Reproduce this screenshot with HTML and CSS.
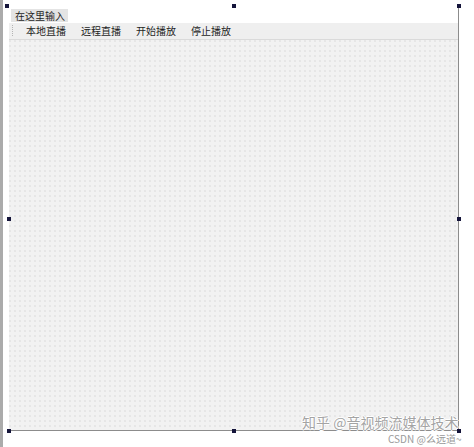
FILE: index.html
```html
<!DOCTYPE html>
<html lang="zh">
<head>
<meta charset="utf-8">
<title>Designer form</title>
<link rel="stylesheet" href="styles.css">
</head>
<body>
<div class="page">
  <div class="strip"></div>
  <div class="stage">
    <div class="form">
      <div class="menubar">
        <span class="typehere">在这里输入</span>
      </div>
      <div class="toolbar">
        <span class="grip"></span>
        <span class="item">本地直播</span>
        <span class="item">远程直播</span>
        <span class="item">开始播放</span>
        <span class="item">停止播放</span>
      </div>
      <div class="grid"></div>
    </div>
  </div>
  <span class="handle h-tl"></span>
  <span class="handle h-tm"></span>
  <span class="handle h-tr"></span>
  <span class="handle h-ml"></span>
  <span class="handle h-mr"></span>
  <span class="handle h-bl"></span>
  <span class="handle h-bm"></span>
  <span class="handle h-br"></span>
  <div class="wm wm-main">知乎 @音视频流媒体技术</div>
  <div class="wm wm-sub">CSDN @么远道~</div>
</div>
</body>
</html>
```
FILE: styles.css
```css
html, body {
  margin: 0;
  padding: 0;
  background: #ffffff;
}
body {
  font-family: "Noto Sans CJK SC", "Noto Sans", sans-serif;
  color: #1e1e1e;
}
.page {
  position: relative;
  display: flex;
  width: 474px;
  height: 447px;
  overflow: hidden;
}
.strip {
  width: 3px;
  background: #ababab;
  flex: none;
}
.stage {
  flex: 1;
  padding: 6px 0 0 6px;
}
.form {
  box-sizing: border-box;
  width: 450px;
  height: 425px;
  border-right: 1px solid #8c8c8c;
  border-bottom: 1px solid #8c8c8c;
  display: flex;
  flex-direction: column;
  background: #ffffff;
}
.menubar {
  height: 17px;
  box-sizing: border-box;
  padding: 3px 0 0 2px;
  display: flex;
  align-items: flex-start;
}
.typehere {
  display: block;
  height: 13px;
  line-height: 13px;
  padding: 0 3px 0 4px;
  background: #e4e4e4;
  font-size: 10px;
}
.toolbar {
  height: 17px;
  box-sizing: border-box;
  background: #efefef;
  border-bottom: 1px solid #dadada;
  display: flex;
  align-items: center;
  gap: 15px;
  font-size: 10px;
  line-height: 12px;
}
.grip {
  width: 2px;
  height: 12px;
  margin-left: 3px;
  margin-right: -3px;
  background-image: linear-gradient(to bottom, #b4b4b4 1px, transparent 1px);
  background-size: 1px 2px;
  background-repeat: repeat-y;
}
.item {
  display: block;
}
.grid {
  flex: 1;
  background-color: #f2f2f2;
  background-image: radial-gradient(circle at 1px 1px, #d3d3d3 0.55px, transparent 0.8px);
  background-size: 5px 5px;
}
.handle {
  position: absolute;
  width: 4px;
  height: 4px;
  background: #14143a;
}
.h-tl { left: 5px; top: 4px; }
.h-tm { left: 232px; top: 4px; }
.h-tr { left: 457px; top: 4px; }
.h-ml { left: 7px; top: 217px; }
.h-mr { left: 457px; top: 217px; }
.h-bl { left: 7px; top: 429px; }
.h-bm { left: 232px; top: 429px; }
.h-br { left: 457px; top: 429px; }
.wm {
  position: absolute;
  white-space: nowrap;
  color: #a4a4a4;
  text-shadow: 0 0 1px #ffffff, 1px 0 0 #ffffff, -1px 0 0 #ffffff, 0 1px 0 #ffffff, 0 -1px 0 #ffffff;
}
.wm-main {
  left: 302px;
  top: 415px;
  font-size: 14px;
  line-height: 15px;
}
.wm-sub {
  left: 388px;
  top: 433px;
  font-size: 10px;
  line-height: 11px;
  color: #9a9a9a;
}
```
